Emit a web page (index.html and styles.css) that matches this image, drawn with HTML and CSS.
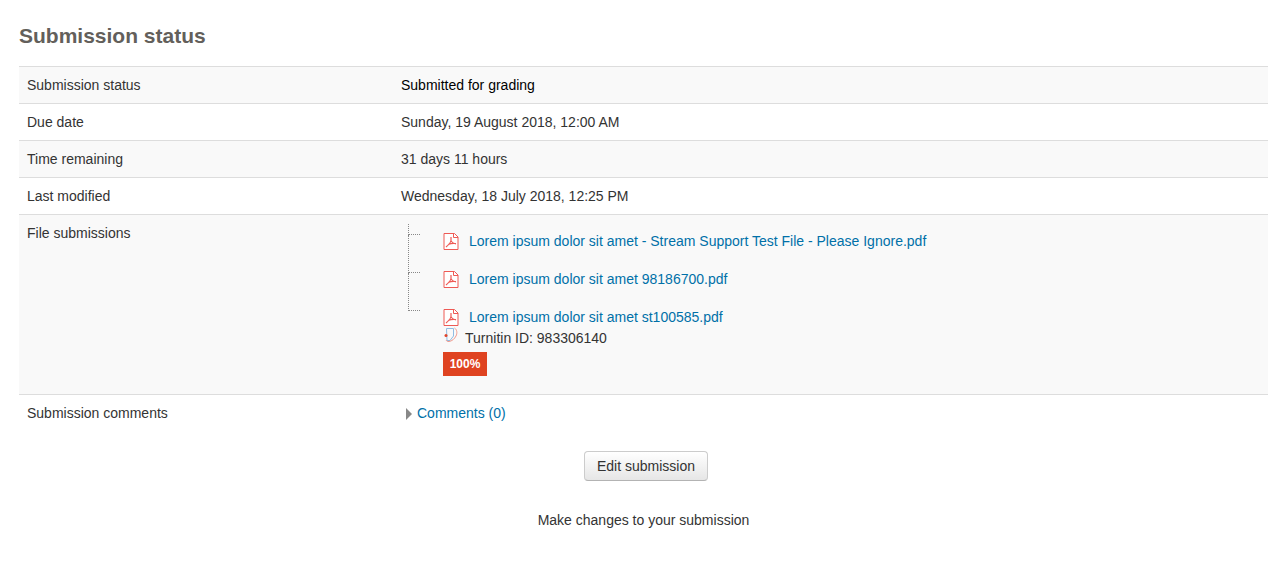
FILE: index.html
```html
<!DOCTYPE html>
<html lang="en">
<head>
    <meta charset="UTF-8">
    <title>Submission status</title>
    <link rel="stylesheet" href="styles.css">
</head>
<body>
    <h2 class="main-title">Submission status</h2>

    <table class="status-table">
        <tr class="odd">
            <td class="label">Submission status</td>
            <td class="value submitted">Submitted for grading</td>
        </tr>
        <tr>
            <td class="label">Due date</td>
            <td class="value">Sunday, 19 August 2018, 12:00 AM</td>
        </tr>
        <tr class="odd">
            <td class="label">Time remaining</td>
            <td class="value">31 days 11 hours</td>
        </tr>
        <tr>
            <td class="label">Last modified</td>
            <td class="value">Wednesday, 18 July 2018, 12:25 PM</td>
        </tr>
        <tr class="odd">
            <td class="label">File submissions</td>
            <td class="value files-cell">
                <ul class="file-tree">
                    <li class="file-row">
                        <svg class="pdf-icon" viewBox="0 0 16 17"><use href="#pdf"/></svg>
                        <a href="#">Lorem ipsum dolor sit amet - Stream Support Test File - Please Ignore.pdf</a>
                    </li>
                    <li class="file-row">
                        <svg class="pdf-icon" viewBox="0 0 16 17"><use href="#pdf"/></svg>
                        <a href="#">Lorem ipsum dolor sit amet 98186700.pdf</a>
                    </li>
                    <li class="file-row">
                        <svg class="pdf-icon" viewBox="0 0 16 17"><use href="#pdf"/></svg>
                        <a href="#">Lorem ipsum dolor sit amet st100585.pdf</a>
                    </li>
                </ul>
                <div class="turnitin">
                    <svg class="tii-icon" viewBox="0 0 16 16">
                        <path d="M3.500 1.500h7v7.500l-3.500 4.500h-3z" fill="none" stroke="#8fbce3" stroke-width="1"/>
                        <path d="M11.500 1c2.500 1.500 3 5 1.500 8s-4 5-7 5.500c-1.500.2-2.500-.5-3-1.500" fill="none" stroke="#f0998c" stroke-width="1"/>
                        <circle cx="3" cy="8.500" r="1.500" fill="#e0442a"/>
                    </svg>
                    <span>Turnitin ID: 983306140</span>
                </div>
                <div class="score">100%</div>
            </td>
        </tr>
        <tr>
            <td class="label">Submission comments</td>
            <td class="value">
                <span class="arrow"></span><a href="#">Comments (0)</a>
            </td>
        </tr>
    </table>

    <div class="actions">
        <button type="button">Edit submission</button>
    </div>
    <p class="hint">Make changes to your submission</p>

    <svg class="defs" width="0" height="0">
        <symbol id="pdf" viewBox="0 0 16 17">
            <path d="M1 .500h10.500l3.500 3.500v12.500h-14z" fill="#fff" stroke="#ee5a55" stroke-width="1"/>
            <path d="M10.500.500v4h4.500" fill="none" stroke="#ee5a55" stroke-width="1"/>
            <path d="M8 4v3.500c-.5 2.500-2.500 4.500-5 6.500M8 8c1 1.500 3 2.500 5 3M5 11.500c2.500-1 5.500-1.500 8-1" fill="none" stroke="#ee5a55" stroke-width="1.200"/>
        </symbol>
    </svg>
</body>
</html>
```

FILE: styles.css
```css
body {
    margin: 0;
    padding: 0 14px 0 19px;
    font-family: "Liberation Sans", Arial, sans-serif;
    font-size: 14px;
    line-height: 20px;
    color: #333;
    background-color: #fff;
}
.main-title {
    margin: 0;
    padding-top: 22px;
    height: 66px;
    box-sizing: border-box;
    font-size: 21px;
    line-height: 28px;
    font-weight: bold;
    color: #635f5b;
}
.status-table {
    width: 100%;
    border-collapse: collapse;
    table-layout: fixed;
}
.status-table td {
    padding: 8px;
    border-top: 1px solid #ddd;
    vertical-align: top;
}
.status-table .label {
    width: 358px;
}
.odd td {
    background-color: #f9f9f9;
}
.submitted {
    color: #000;
}
a {
    color: #0070a8;
    text-decoration: none;
}
.status-table .files-cell {
    padding-bottom: 18px;
}
.file-tree {
    list-style: none;
    margin: -1px 0 0;
    padding: 0 0 0 7px;
}
.file-row {
    position: relative;
    display: flex;
    align-items: center;
    height: 38px;
    padding-left: 35px;
}
.file-row::before {
    content: "";
    position: absolute;
    left: 0;
    top: 2px;
    width: 11px;
    height: 10px;
    border-left: 1px dotted #888;
    border-bottom: 1px dotted #888;
}
.file-row + .file-row::before {
    top: -25px;
    height: 37px;
}
.pdf-icon {
    width: 16px;
    height: 17px;
    margin-right: 10px;
    flex: none;
}
.turnitin {
    display: flex;
    align-items: center;
    margin-left: 42px;
    margin-top: -8px;
    height: 20px;
}
.tii-icon {
    width: 16px;
    height: 16px;
    margin-right: 6px;
    margin-top: -6px;
}
.score {
    width: 44px;
    height: 24px;
    margin: 4px 0 0 42px;
    background-color: #df4321;
    color: #fff;
    font-size: 12px;
    font-weight: bold;
    line-height: 24px;
    text-align: center;
}
.arrow {
    display: inline-block;
    margin: 0 5px 0 5px;
    border-left: 6px solid #888;
    border-top: 6px solid transparent;
    border-bottom: 6px solid transparent;
    vertical-align: -2px;
}
.actions {
    margin-top: 20px;
    padding-left: 5px;
    text-align: center;
}
button {
    width: 124px;
    height: 30px;
    padding: 0;
    border: 1px solid #ccc;
    border-bottom-color: #b3b3b3;
    border-radius: 4px;
    background: linear-gradient(#fff, #e6e6e6);
    color: #333;
    font-family: inherit;
    font-size: 14px;
    cursor: pointer;
}
.hint {
    margin: 29px 0 0;
    text-align: center;
}
.defs {
    position: absolute;
}
```
